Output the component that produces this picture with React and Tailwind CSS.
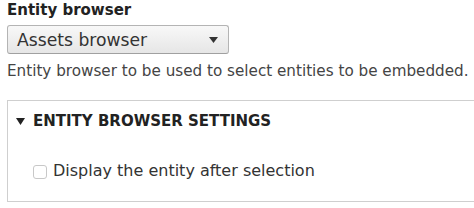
export default function App() {
  return (
    <div
      className="w-[474px] h-[208px] overflow-hidden bg-white text-[#333]"
      style={{ fontFamily: "'DejaVu Sans', sans-serif" }}
    >
      <div className="pl-[7px] pt-[1px]">
        <div className="text-[15px] leading-[18px] font-bold text-[#222]">Entity browser</div>
        <div className="mt-[6px] w-[222px] h-[29px] flex items-center justify-between rounded-[3px] border border-[#b4b4b4] border-b-[#a0a0a0] bg-gradient-to-b from-[#f8f8f8] to-[#e6e6e6] pl-[9px] pr-[10px]">
          <span className="text-[17.2px] leading-[20px] text-[#333] pt-[1px]">Assets browser</span>
          <svg width="9" height="6" viewBox="0 0 9 6" className="mt-[1px]">
            <polygon points="0,0 9,0 4.5,6" fill="#333" />
          </svg>
        </div>
        <div className="mt-[7px] text-[15.2px] leading-[20px] whitespace-nowrap text-[#444]">
          Entity browser to be used to select entities to be embedded.
        </div>
        <div className="mt-[19px] w-[500px] h-[102px] border border-[#cfcfcf] bg-white">
          <div className="pt-[10px] pl-[8px] flex items-center text-[15px] leading-[20px] font-bold text-[#222]">
            <svg width="9" height="8" viewBox="0 0 9 8" className="mr-[8px] mt-[1px]">
              <polygon points="0,0 9,0 4.5,7" fill="#222" />
            </svg>
            <span>ENTITY BROWSER SETTINGS</span>
          </div>
          <div className="mt-[30px] pl-[25px] flex items-center">
            <span className="block w-[14px] h-[14px] rounded-[3px] border border-[#c8c8c8] bg-white mt-[1px]"></span>
            <span className="ml-[6px] text-[16px] leading-[20px] text-[#333]">Display the entity after selection</span>
          </div>
        </div>
      </div>
    </div>
  );
}
